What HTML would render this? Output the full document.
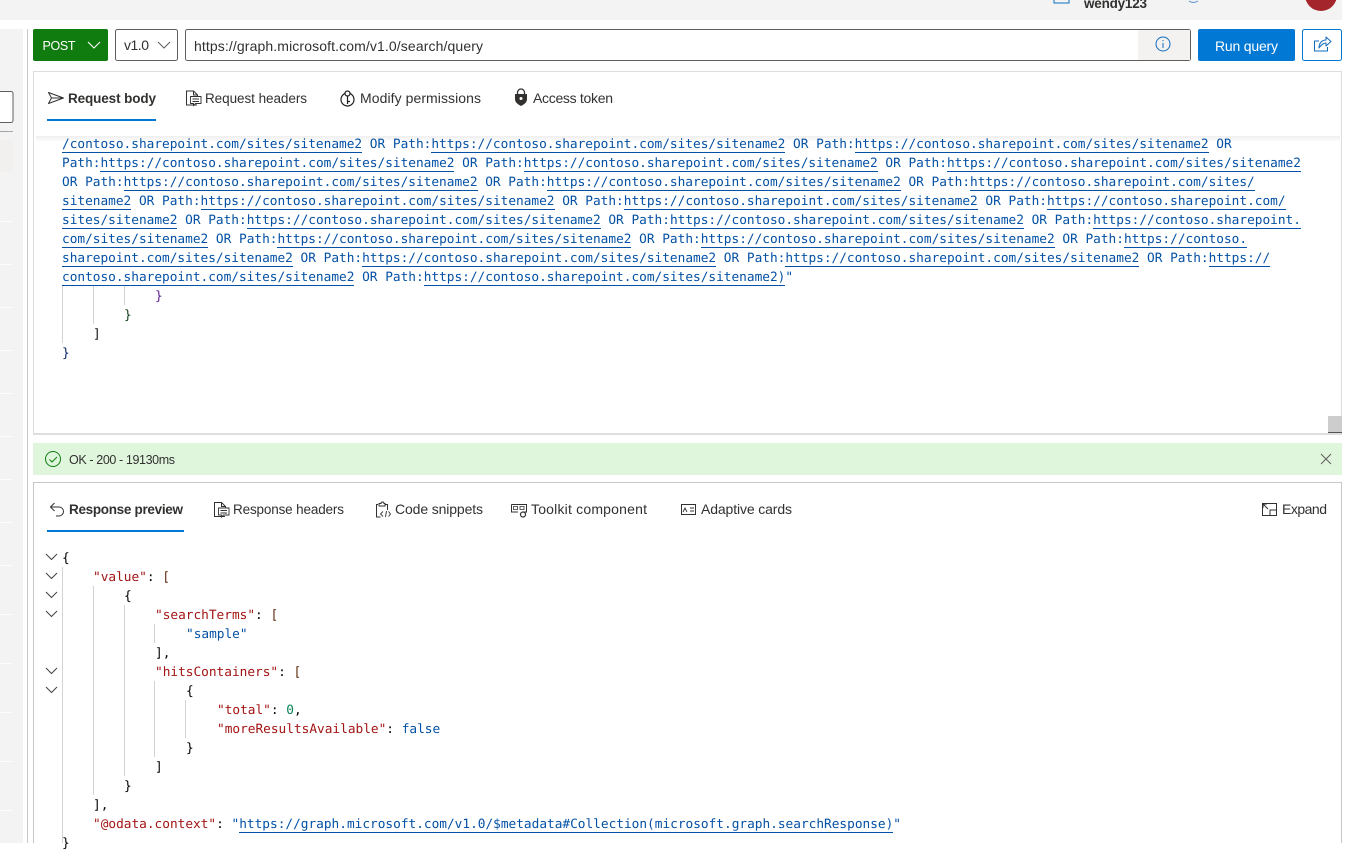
<!DOCTYPE html>
<html lang="en"><head><meta charset="utf-8"><title>Graph Explorer</title>
<style>
html,body{margin:0;padding:0;background:#fff;width:1354px;height:843px;overflow:hidden}
#u{position:absolute;left:0;top:0}
#u text{font-family:"Liberation Sans",sans-serif;font-size:14px;fill:#323130}
.m{position:absolute;white-space:pre;height:19px;line-height:21px;font-family:"DejaVu Sans Mono","Liberation Mono",monospace;font-size:12.79px;color:#000;text-rendering:geometricPrecision}
.b{color:#0451a5}
.k{color:#a31515}
.n{color:#098658}
.a{display:inline-block;height:19px;box-sizing:border-box;border-bottom:1px solid #0451a5;color:#0451a5;vertical-align:top}
.g{position:absolute;width:1px;background:#d3d3d3}
</style></head><body>
<svg id="u" width="1354" height="843" viewBox="0 0 1354 843" fill="none">
<rect x="0" y="0" width="1342" height="20" fill="#f3f3f3"/>
<path d="M1054 0v3h15V0" stroke="#0f6cbd" stroke-width="1"/>
<text x="1084" y="8" style="font-weight:bold;font-size:13.500px" textLength="63">wendy123</text>
<path d="M1189 1q4 3 9 0" stroke="#5b8fd0"/>
<circle cx="1321" cy="-5" r="16" fill="#a4262c"/>
<!-- sidebar -->
<rect x="0" y="29" width="23" height="814" fill="#f3f3f3"/>
<rect x="0" y="140" width="13" height="32" fill="#f1f0ee"/>
<rect x="-3" y="91.500" width="16" height="31" rx="2" fill="#fff" stroke="#605e5c"/>
<rect x="0" y="131" width="13" height="1" fill="#a6a6a6"/>
<path d="M0 221.500h13M0 264.500h13M0 307.500h13M0 350.500h13M0 393.500h13M0 436.500h13M0 479.500h13M0 522.500h13M0 565.500h13M0 614.500h13M0 663.500h13M0 712.500h13M0 761.500h13M0 810.500h13" stroke="#fcfcfc"/>
<rect x="27" y="29" width="1" height="814" fill="#c8c8c8"/>
<!-- query bar -->
<rect x="33" y="29" width="75" height="32" rx="2" fill="#107c10"/>
<text x="42.500" y="50" style="fill:#fff;font-size:12.500px" textLength="33">POST</text>
<path d="M88 42l6 6 6-6" stroke="#fff" stroke-width="1.100"/>
<rect x="115.500" y="29.500" width="62" height="31" rx="2" fill="#fff" stroke="#605e5c"/>
<text x="124" y="50" textLength="25">v1.0</text>
<path d="M158 42l6 6 6-6" stroke="#605e5c"/>
<rect x="185.500" y="29.500" width="1005" height="31" rx="2" fill="#fff" stroke="#605e5c"/>
<rect x="1138" y="30" width="52" height="30" fill="#f3f2f1"/>
<text x="194" y="51" textLength="289">https://graph.microsoft.com/v1.0/search/query</text>
<circle cx="1163" cy="44" r="7" stroke="#0f6cbd"/>
<path d="M1163 43v5M1163 40v1.200" stroke="#0f6cbd"/>
<rect x="1198" y="29" width="97" height="32" rx="2" fill="#0078d4"/>
<text x="1215" y="51" style="fill:#fff" textLength="63">Run query</text>
<rect x="1302.500" y="29.500" width="39" height="31" rx="2" fill="#fff" stroke="#0078d4"/>
<path d="M1319 41h-4.500v10h13v-4M1319 48c0-5 3-8 7-8v-3l5 4.500-5 4.500v-3c-3 0-5 2-7 5z" stroke="#0f6cbd" stroke-linejoin="round"/>
<!-- request panel -->
<rect x="33.500" y="71.500" width="1308" height="362" fill="#fff" stroke="#dedede"/>
<rect x="33" y="433" width="1309" height="2" fill="#dedede"/>
<defs><linearGradient id="s" x1="0" y1="0" x2="0" y2="1"><stop offset="0" stop-color="#efefef"/><stop offset="1" stop-color="#fff"/></linearGradient></defs>
<rect x="36" y="136" width="1304" height="6" fill="url(#s)"/>
<path d="M48.500 92.500l15 5.500-15 5.500 3-5.500zM51.500 98h12" stroke="#323130" stroke-linejoin="round"/>
<text x="68" y="103" style="font-weight:bold;font-size:13.500px" textLength="88">Request body</text>
<rect x="47" y="119" width="109" height="2" fill="#0078d4"/>
<path d="M197 105h-10.500V91h7l4 4v1.500M193.500 91v4h4" stroke="#323130"/>
<path d="M190.500 96.500h10.500v7h-5.500l-2 2v-2h-3zM192.500 99h6.500M192.500 101.500h6.500" stroke="#323130" stroke-width=".9"/>
<text x="205" y="103" style="font-size:13.500px" textLength="102">Request headers</text>
<circle cx="347.500" cy="99.500" r="6.500" stroke="#201f1e" stroke-width="1.200"/>
<circle cx="347.500" cy="93.500" r="2.500" fill="#fff" stroke="#201f1e" stroke-width="1.200"/>
<path d="M347.500 96v8M347.500 101.500h2.500" stroke="#201f1e" stroke-width="1.200"/>
<text x="360" y="103" textLength="121">Modify permissions</text>
<path d="M517.500 94v-1.500a3.500 3.500 0 017 0V94" stroke="#323130" stroke-width="1.300"/>
<path d="M515 94h12v5c0 3.500-3 5.500-6 7-3-1.500-6-3.500-6-7z" fill="#323130"/>
<circle cx="521" cy="98.500" r="1.500" fill="#fff"/>
<text x="533" y="103" textLength="80">Access token</text>
<rect x="1328" y="416" width="14" height="16" fill="#cdcdcd"/>
<rect x="1328" y="432" width="14" height="1" fill="#555"/>
<!-- status -->
<rect x="33" y="443" width="1309" height="32" fill="#dff6dd"/>
<circle cx="53" cy="459" r="7.500" stroke="#107c10"/>
<path d="M49.500 459.500l2.500 2.500 5-5" stroke="#107c10"/>
<text x="69" y="464" style="font-size:12.500px" textLength="106">OK - 200 - 19130ms</text>
<path d="M1321 454l10 10M1331 454l-10 10" stroke="#605e5c"/>
<!-- response panel -->
<path d="M33.500 843V482.500h1308V843" fill="#fff" stroke="#c8c8c8"/>
<path d="M54.500 503l-4 4 4 4M51 507h8a4.500 4.500 0 010 9h-3" stroke="#323130"/>
<text x="69" y="514" style="font-weight:bold;font-size:13.500px" textLength="114">Response preview</text>
<rect x="47" y="530" width="137" height="2" fill="#0078d4"/>
<path d="M225 516.500h-10.500v-14h7l4 4v1.500M221.500 502.500v4h4" stroke="#323130"/>
<path d="M218.500 508h10.500v7h-5.500l-2 2v-2h-3zM220.500 510.500h6.500M220.500 513h6.500" stroke="#323130" stroke-width=".9"/>
<text x="233" y="514" style="font-size:13.500px" textLength="111">Response headers</text>
<path d="M378 504.500h-1.500v12.500h4M387.500 510v-5.500H385M379 503.500h2a1.500 1.500 0 013 0h1v2.500h-6z" stroke="#323130"/>
<path d="M383 511.500l-2.500 2.500 2.500 2.500M385.500 517l1-6M388.500 511.500l2 2.500-2 2.500" stroke="#323130" stroke-width=".9"/>
<text x="395" y="514" textLength="88">Code snippets</text>
<path d="M511.500 504.500h15v7.500h-4M518 512h-6.500v-7.500" stroke="#323130"/>
<path d="M513.500 506.500h4v3h-4zM520 506.500h4v3h-4z" stroke="#323130" stroke-width=".8"/>
<circle cx="523" cy="514.500" r="2.500" stroke="#323130" stroke-width="1.200"/>
<text x="531" y="514" textLength="116">Toolkit component</text>
<rect x="681.500" y="504.500" width="14" height="10" stroke="#323130"/>
<path d="M683 512l2-4 2 4M690 508h4M690 511h4" stroke="#323130" stroke-width=".9"/>
<text x="701" y="514" textLength="91">Adaptive cards</text>
<path d="M1262.500 503.500h14v12h-14zM1270 515.500v-5.500h6.500M1263 504l5 5M1263 508v-4h4" stroke="#323130"/>
<text x="1282" y="514" textLength="45">Expand</text>
<path d="M46 554l5.500 5.500 5.500-5.500M46 573l5.500 5.500 5.500-5.500M46 592l5.500 5.500 5.500-5.500M46 611l5.500 5.500 5.500-5.500M46 668l5.500 5.500 5.500-5.500M46 687l5.500 5.500 5.500-5.500" stroke="#424242"/>
</svg>

<div class="g" style="left:62px;top:286px;height:57px"></div>
<div class="g" style="left:93px;top:286px;height:38px"></div>
<div class="g" style="left:124px;top:286px;height:19px"></div>
<div class="g" style="left:62px;top:567px;height:276px"></div>
<div class="g" style="left:93px;top:586px;height:209px"></div>
<div class="g" style="left:124px;top:605px;height:171px"></div>
<div class="g" style="left:154px;top:624px;height:19px"></div>
<div class="g" style="left:154px;top:681px;height:76px"></div>
<div class="g" style="left:185px;top:700px;height:38px"></div>

<div class="m b" style="left:62px;top:134px"><span class="a">/contoso.sharepoint.com/sites/sitename2</span> OR Path:<span class="a">https://contoso.sharepoint.com/sites/sitename2</span> OR Path:<span class="a">https://contoso.sharepoint.com/sites/sitename2</span> OR</div>
<div class="m b" style="left:62px;top:153px">Path:<span class="a">https://contoso.sharepoint.com/sites/sitename2</span> OR Path:<span class="a">https://contoso.sharepoint.com/sites/sitename2</span> OR Path:<span class="a">https://contoso.sharepoint.com/sites/sitename2</span></div>
<div class="m b" style="left:62px;top:172px">OR Path:<span class="a">https://contoso.sharepoint.com/sites/sitename2</span> OR Path:<span class="a">https://contoso.sharepoint.com/sites/sitename2</span> OR Path:<span class="a">https://contoso.sharepoint.com/sites/</span></div>
<div class="m b" style="left:62px;top:191px"><span class="a">sitename2</span> OR Path:<span class="a">https://contoso.sharepoint.com/sites/sitename2</span> OR Path:<span class="a">https://contoso.sharepoint.com/sites/sitename2</span> OR Path:<span class="a">https://contoso.sharepoint.com/</span></div>
<div class="m b" style="left:62px;top:210px"><span class="a">sites/sitename2</span> OR Path:<span class="a">https://contoso.sharepoint.com/sites/sitename2</span> OR Path:<span class="a">https://contoso.sharepoint.com/sites/sitename2</span> OR Path:<span class="a">https://contoso.sharepoint.</span></div>
<div class="m b" style="left:62px;top:229px"><span class="a">com/sites/sitename2</span> OR Path:<span class="a">https://contoso.sharepoint.com/sites/sitename2</span> OR Path:<span class="a">https://contoso.sharepoint.com/sites/sitename2</span> OR Path:<span class="a">https://contoso.</span></div>
<div class="m b" style="left:62px;top:248px"><span class="a">sharepoint.com/sites/sitename2</span> OR Path:<span class="a">https://contoso.sharepoint.com/sites/sitename2</span> OR Path:<span class="a">https://contoso.sharepoint.com/sites/sitename2</span> OR Path:<span class="a">https://</span></div>
<div class="m b" style="left:62px;top:267px"><span class="a">contoso.sharepoint.com/sites/sitename2</span> OR Path:<span class="a">https://contoso.sharepoint.com/sites/sitename2)</span>"</div>
<div class="m" style="left:155px;top:286px;color:#5c1f91">}</div>
<div class="m" style="left:124px;top:305px;color:#14401a">}</div>
<div class="m" style="left:93px;top:324px;color:#111">]</div>
<div class="m" style="left:62px;top:343px;color:#0a2a6b">}</div>

<div class="m" style="left:62px;top:548px">{</div>
<div class="m" style="left:93px;top:567px"><span class="k">"value"</span>: <span style="color:#5e2a0c">[</span></div>
<div class="m" style="left:124px;top:586px">{</div>
<div class="m" style="left:155px;top:605px"><span class="k">"searchTerms"</span>: <span style="color:#5e2a0c">[</span></div>
<div class="m b" style="left:186px;top:624px">"sample"</div>
<div class="m" style="left:155px;top:643px">],</div>
<div class="m" style="left:155px;top:662px"><span class="k">"hitsContainers"</span>: <span style="color:#5e2a0c">[</span></div>
<div class="m" style="left:186px;top:681px">{</div>
<div class="m" style="left:217px;top:700px"><span class="k">"total"</span>: <span class="n">0</span>,</div>
<div class="m" style="left:217px;top:719px"><span class="k">"moreResultsAvailable"</span>: <span class="b">false</span></div>
<div class="m" style="left:186px;top:738px">}</div>
<div class="m" style="left:155px;top:757px">]</div>
<div class="m" style="left:124px;top:776px">}</div>
<div class="m" style="left:93px;top:795px">],</div>
<div class="m" style="left:93px;top:814px"><span class="k">"@odata.context"</span>: <span class="b">"</span><span class="a">https://graph.microsoft.com/v1.0/$metadata#Collection(microsoft.graph.searchResponse)</span><span class="b">"</span></div>
<div class="m" style="left:62px;top:833px">}</div>
</body></html>
